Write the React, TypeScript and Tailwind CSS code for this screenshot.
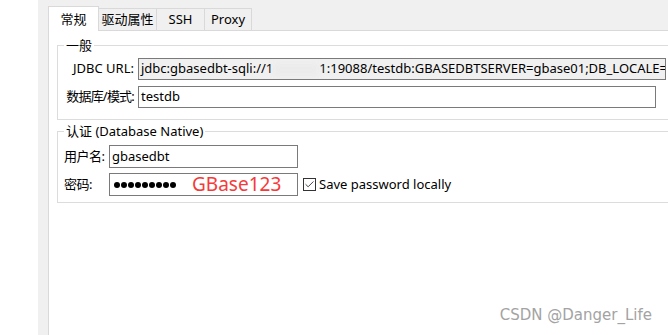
import { Check } from 'lucide-react';

const font = 'font-["Segoe_UI","Noto_Sans","Noto_Sans_CJK_SC",sans-serif]';

const tabs = [
  { label: '常规', w: 'w-[51px]' },
  { label: '驱动属性', w: 'w-[58px]' },
  { label: 'SSH', w: 'w-[48px]' },
  { label: 'Proxy', w: 'w-[47px]' },
];

function Field({ value, readOnly, width, height = 'h-[22px]' }: { value: React.ReactNode; readOnly?: boolean; width: string; height?: string }) {
  return (
    <div
      className={`${width} ${height} border border-[#7a7a7a] flex items-center px-[2px] overflow-hidden whitespace-nowrap ${
        readOnly ? 'bg-[#f0f0f0]' : 'bg-white'
      }`}
    >
      {value}
    </div>
  );
}

export default function App() {
  return (
    <div className={`relative w-[668px] h-[335px] overflow-hidden bg-white flex text-[13px] text-black ${font}`}>
      <div className="w-[38px] shrink-0 bg-white" />

      <div className="flex-1 flex flex-col min-w-0">
        {/* tab strip */}
        <div className="h-[30px] shrink-0 bg-[#f0f0f0] pl-[10px] flex items-end">
          {tabs.map((t, i) =>
            i === 0 ? (
              <div
                key={t.label}
                className={`${t.w} h-[25px] -mb-px relative z-10 bg-white border border-b-0 border-[#d9d9d9] flex items-center justify-center leading-none`}
              >
                {t.label}
              </div>
            ) : (
              <div
                key={t.label}
                className={`${t.w} h-[22px] bg-[#f0f0f0] border border-l-0 border-b-0 border-[#d9d9d9] flex items-center justify-center leading-none`}
              >
                {t.label}
              </div>
            )
          )}
        </div>

        <div className="flex-1 flex min-h-0">
          <div className="w-[10px] shrink-0 bg-[#f0f0f0]" />
          <div className="flex-1 bg-white border-l border-t border-[#d9d9d9] pl-[8px] pt-[6px]">
            <fieldset className="w-[640px] border border-[#dcdcdc] pl-[6px] pb-[11px]">
              <legend className="px-[2px] leading-[17px]">一般</legend>
              <div className="flex flex-col gap-[6px] mt-[4px]">
                <div className="flex items-center gap-[4px]">
                  <span className="w-[70px] text-right whitespace-nowrap">JDBC URL:</span>
                  <Field
                    width="w-[528px]"
                    readOnly
                    value={
                      <span>
                        jdbc:gbasedbt-sqli://1
                        <span className="inline-block w-[46px] h-[12px] align-middle bg-[#ebebeb] blur-[3px]" />
                        1:19088/testdb:GBASEDBTSERVER=gbase01;DB_LOCALE=
                      </span>
                    }
                  />
                </div>
                <div className="flex items-center gap-[4px]">
                  <span className="w-[70px] text-right whitespace-nowrap tracking-[-0.8px]">数据库/模式:</span>
                  <Field width="w-[518px]" value="testdb" />
                </div>
              </div>
            </fieldset>

            <fieldset className="w-[640px] mt-[3px] border border-[#dcdcdc] pl-[6px] pb-[6px]">
              <legend className="px-[2px] leading-[17px] whitespace-nowrap">认证 (Database Native)</legend>
              <div className="flex flex-col gap-[5px] mt-[5px]">
                <div className="flex items-center">
                  <span className="w-[45px] whitespace-nowrap tracking-[-0.5px]">用户名:</span>
                  <Field width="w-[189px]" height="h-[23px]" value="gbasedbt" />
                </div>
                <div className="flex items-center">
                  <span className="w-[45px] whitespace-nowrap tracking-[-0.5px]">密码:</span>
                  <div className="w-[189px] h-[23px] border border-[#7a7a7a] bg-white flex items-center pl-[4px]">
                    <div className="flex gap-[1px]">
                      {Array.from({ length: 9 }).map((_, i) => (
                        <span key={i} className="w-[6px] h-[6px] rounded-full bg-black" />
                      ))}
                    </div>
                    <span className="ml-[16px] text-[19px] leading-none text-[#f53a3a]">GBase123</span>
                  </div>
                  <div className="ml-[5px] w-[13px] h-[13px] border border-[#333] bg-white flex items-center justify-center">
                    <Check className="w-[11px] h-[11px] text-[#333]" strokeWidth={2} />
                  </div>
                  <span className="ml-[3px] whitespace-nowrap">Save password locally</span>
                </div>
              </div>
            </fieldset>
          </div>
        </div>
      </div>

      <div className='absolute right-[16px] bottom-[9px] text-[15px] text-[#a3a3a3] font-["DejaVu_Sans",sans-serif] [text-shadow:0_0_1px_#fff]'>
        CSDN @Danger_Life
      </div>
    </div>
  );
}
